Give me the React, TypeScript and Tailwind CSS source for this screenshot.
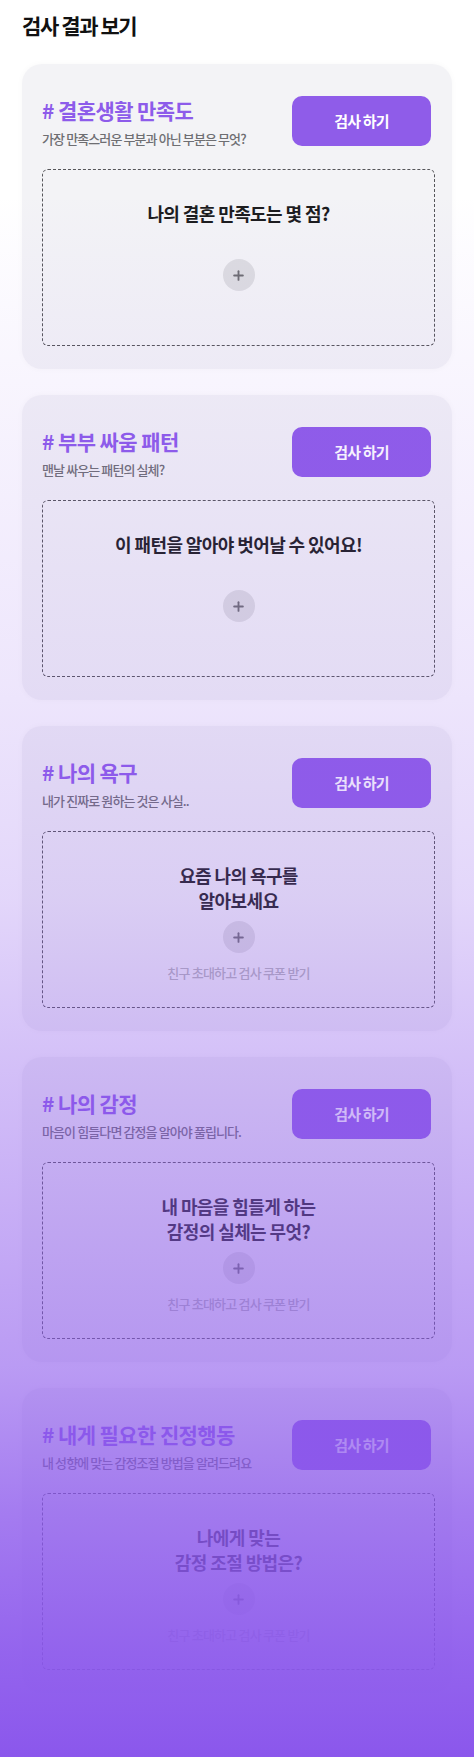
import { Plus } from 'lucide-react';

type Test = {
  title: string;
  desc: string;
  lines: string[];
  coupon?: boolean;
};

const tests: Test[] = [
  { title: '결혼생활 만족도', desc: '가장 만족스러운 부분과 아닌 부분은 무엇?', lines: ['나의 결혼 만족도는 몇 점?'] },
  { title: '부부 싸움 패턴', desc: '맨날 싸우는 패턴의 실체?', lines: ['이 패턴을 알아야 벗어날 수 있어요!'] },
  { title: '나의 욕구', desc: '내가 진짜로 원하는 것은 사실..', lines: ['요즘 나의 욕구를', '알아보세요'], coupon: true },
  { title: '나의 감정', desc: '마음이 힘들다면 감정을 알아야 풀립니다.', lines: ['내 마음을 힘들게 하는', '감정의 실체는 무엇?'], coupon: true },
  { title: '내게 필요한 진정행동', desc: '내 성향에 맞는 감정조절 방법을 알려드려요', lines: ['나에게 맞는', '감정 조절 방법은?'], coupon: true },
];

function TestCard({ test }: { test: Test }) {
  return (
    <div className="rounded-[20px] bg-[#f3f3f6] pt-[32px] pb-[23px] pl-5 pr-[17px] shadow-[0_0_6px_rgba(0,0,0,0.03)]">
      <div className="flex items-start justify-between">
        <div>
          <h2 className="text-[21px] font-bold leading-[28px] tracking-[-0.6px] text-[#8d5bea]"># {test.title}</h2>
          <p className="mt-[6px] text-[13px] font-medium leading-[18px] tracking-[-0.9px] text-[#6e6e72]">{test.desc}</p>
        </div>
        <button className="mr-1 h-[50px] w-[139px] rounded-[10px] bg-[#8f5ce9] text-[15px] font-semibold tracking-[-0.8px] text-white">
          검사 하기
        </button>
      </div>

      <div className="mt-[21px] flex h-[177px] flex-col items-center rounded-[6px] border-[1.5px] border-dashed border-[#555559] pt-[31px]">
        <div className="min-h-[50px] text-center text-[18px] font-bold leading-[25px] tracking-[-0.6px] text-[#1c1c1e]">
          {test.lines.map((l) => (
            <p key={l}>{l}</p>
          ))}
        </div>
        <div className="mt-[8px] flex h-8 w-8 items-center justify-center rounded-full bg-[#dcdce0]">
          <Plus className="h-[15px] w-[15px] text-[#6d6d72]" strokeWidth={3} />
        </div>
        {test.coupon && (
          <p className="mt-[11px] text-[13px] font-medium leading-[18px] tracking-[-0.8px] text-[#b4b4b8]">친구 초대하고 검사 쿠폰 받기</p>
        )}
      </div>
    </div>
  );
}

export default function App() {
  return (
    <div
      className="relative min-h-[1757px] w-full overflow-hidden bg-white"
      style={{ fontFamily: '"Noto Sans CJK KR", "Noto Sans", sans-serif' }}
    >
      <div className="px-[22px] pt-[10px]">
        <h1 className="text-[21px] font-bold leading-[30px] tracking-[-1.4px] text-[#111]">검사 결과 보기</h1>
        <div className="mt-[24px] flex flex-col gap-[26px]">
          {tests.map((t) => (
            <TestCard key={t.title} test={t} />
          ))}
        </div>
      </div>

      {/* purple fade laid over the lower cards */}
      <div className="pointer-events-none absolute inset-0 bg-[linear-gradient(to_bottom,rgba(139,87,236,0)_11%,rgba(139,87,236,0.08)_25%,rgba(139,87,236,0.15)_39%,rgba(139,87,236,0.24)_51%,rgba(139,87,236,0.37)_60%,rgba(139,87,236,0.6)_78%,rgba(139,87,236,0.78)_86%,rgba(139,87,236,0.92)_94%,rgba(139,87,236,1)_100%)]" />
    </div>
  );
}
